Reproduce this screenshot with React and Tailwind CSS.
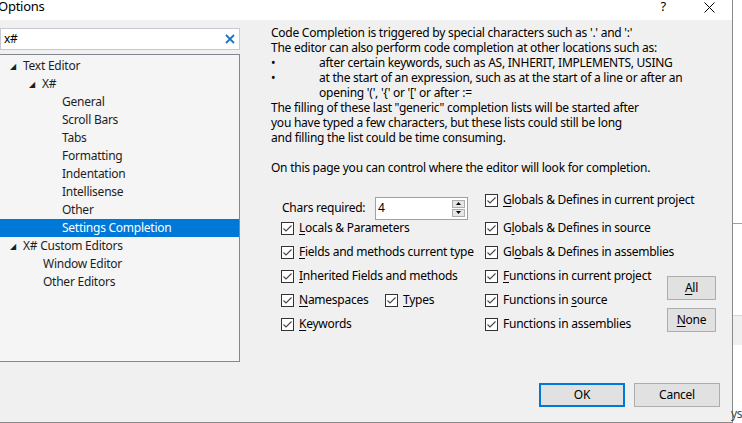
import React from "react";

const font = { fontFamily: '"Segoe UI", "Noto Sans", "Open Sans", sans-serif' };

function Check({ children }) {
  return (
    <div className="flex items-center h-[16px]">
      <div className="w-[13px] h-[13px] border border-[#333333] bg-white flex items-center justify-center shrink-0">
        <svg width="11" height="11" viewBox="0 0 11 11">
          <path d="M1.5 5.5 L4 8 L9.5 2.5" fill="none" stroke="#444" strokeWidth="1.1" />
        </svg>
      </div>
      <span className="ml-[5px] whitespace-nowrap">{children}</span>
    </div>
  );
}

const U = ({ children }) => <span className="underline underline-offset-2">{children}</span>;

function TreeRow({ indent, arrow, label, selected }) {
  return (
    <div
      className={`h-[18px] flex items-center whitespace-nowrap ${selected ? "bg-[#0078d7] text-white" : "text-[#1e1e1e]"}`}
      style={{ paddingLeft: indent }}
    >
      <span className="w-[13px] text-[8px] text-[#1e1e1e]">{arrow ? "◢" : ""}</span>
      <span>{label}</span>
    </div>
  );
}

export default function App() {
  const lines = [
    "Code Completion is triggered by special characters such as '.' and ':'",
    "The editor can also perform code completion at other locations such as:",
  ];
  return (
    <div className="w-[742px] h-[423px] flex bg-white overflow-hidden text-[12px] tracking-[-0.25px] text-black" style={font}>
      <div className="w-[733px] h-[423px] flex flex-col border-r border-b border-[#8a8a8a] shrink-0">
        {/* title */}
        <div className="h-[20px] bg-white flex items-center relative">
          <span className="text-[13px] -ml-[2px] -mt-[6px]">Options</span>
          <div className="flex-1" />
          <span className="text-[13px] mr-[38px] -mt-[6px]">?</span>
          <svg width="11" height="11" viewBox="0 0 11 11" className="mr-[17px] -mt-[6px]">
            <path d="M0.5 0.5 L10.5 10.5 M10.5 0.5 L0.5 10.5" stroke="#000" strokeWidth="1" />
          </svg>
        </div>
        {/* body */}
        <div className="flex-1 bg-[#f0f0f0] flex">
          {/* left */}
          <div className="w-[240px] flex flex-col pt-[8px]">
            <div className="h-[22px] bg-white border border-[#c5c8d6] flex items-center pl-[3px] pr-[4px]">
              <span className="flex-1">x#</span>
              <svg width="10" height="10" viewBox="0 0 10 10">
                <path d="M1 1 L9 9 M9 1 L1 9" stroke="#1e72c8" strokeWidth="1.8" />
              </svg>
            </div>
            <div className="mt-[4px] h-[308px] bg-[#f5f5f5] border border-[#828790] border-l-0 pt-[2px]">
              <TreeRow indent={10} arrow label="Text Editor" />
              <TreeRow indent={29} arrow label="X#" />
              <TreeRow indent={49} label="General" />
              <TreeRow indent={49} label="Scroll Bars" />
              <TreeRow indent={49} label="Tabs" />
              <TreeRow indent={49} label="Formatting" />
              <TreeRow indent={49} label="Indentation" />
              <TreeRow indent={49} label="Intellisense" />
              <TreeRow indent={49} label="Other" />
              <TreeRow indent={49} label="Settings Completion" selected />
              <TreeRow indent={10} arrow label="X# Custom Editors" />
              <TreeRow indent={30} label="Window Editor" />
              <TreeRow indent={30} label="Other Editors" />
            </div>
          </div>
          {/* right */}
          <div className="flex-1 flex flex-col pl-[31px] pt-[5px]">
            <div className="leading-[15px]">
              {lines.map((l) => (
                <div key={l} className="h-[15px] whitespace-nowrap">{l}</div>
              ))}
              <div className="h-[15px] flex whitespace-nowrap">
                <span className="w-[48px]">•</span>
                <span>after certain keywords, such as AS, INHERIT, IMPLEMENTS, USING</span>
              </div>
              <div className="h-[15px] flex whitespace-nowrap">
                <span className="w-[48px]">•</span>
                <span>at the start of an expression, such as at the start of a line or after an</span>
              </div>
              <div className="h-[15px] pl-[48px] whitespace-nowrap">{"opening '(', '{' or '[' or after :="}</div>
              <div className="h-[15px] whitespace-nowrap">The filling of these last "generic" completion lists will be started after</div>
              <div className="h-[15px] whitespace-nowrap">you have typed a few characters, but these lists could still be long</div>
              <div className="h-[15px] whitespace-nowrap">and filling the list could be time consuming.</div>
              <div className="h-[15px]" />
              <div className="h-[15px] whitespace-nowrap">On this page you can control where the editor will look for completion.</div>
            </div>
            <div className="flex mt-[17px]">
              {/* left options */}
              <div className="w-[214px] flex flex-col pl-[10px] pt-[4px]">
                <div className="h-[24px] flex items-center">
                  <span className="ml-[1px] w-[93px]">Chars required:</span>
                  <div className="w-[93px] h-[23px] bg-white border border-[#a0a0a0] flex items-center pl-[2px] pr-[2px]">
                    <span className="flex-1">4</span>
                    <div className="flex flex-col gap-[1px]">
                      <div className="w-[13px] h-[8px] bg-[#e5e5e5] border border-[#adadad] flex items-center justify-center">
                        <svg width="5" height="3" viewBox="0 0 5 3"><path d="M2.5 0 L5 3 L0 3 Z" fill="#000" /></svg>
                      </div>
                      <div className="w-[13px] h-[8px] bg-[#e5e5e5] border border-[#adadad] flex items-center justify-center">
                        <svg width="5" height="3" viewBox="0 0 5 3"><path d="M0 0 L5 0 L2.5 3 Z" fill="#000" /></svg>
                      </div>
                    </div>
                  </div>
                </div>
                <div className="flex flex-col gap-[8px]">
                  <Check><U>L</U>ocals &amp; Parameters</Check>
                  <Check><U>F</U>ields and methods current type</Check>
                  <Check><U>I</U>nherited Fields and methods</Check>
                  <div className="flex">
                    <div className="w-[104px]"><Check><U>N</U>amespaces</Check></div>
                    <Check><U>T</U>ypes</Check>
                  </div>
                  <Check><U>K</U>eywords</Check>
                </div>
              </div>
              {/* right options */}
              <div className="w-[182px] flex flex-col">
                <Check><U>G</U>lobals &amp; Defines in current project</Check>
                <div className="flex flex-col gap-[8px] mt-[12px]">
                  <Check>G<U>l</U>obals &amp; Defines in source</Check>
                  <Check>Gl<U>o</U>bals &amp; Defines in assemblies</Check>
                  <Check><U>F</U>unctions in current project</Check>
                  <Check>Functions in <U>s</U>ource</Check>
                  <Check>Functions in assemblies</Check>
                </div>
              </div>
              <div className="flex flex-col pt-[84px] gap-[8px]">
                <button className="w-[49px] h-[24px] bg-[#e1e1e1] border border-[#adadad]"><U>A</U>ll</button>
                <button className="w-[49px] h-[24px] bg-[#e1e1e1] border border-[#adadad]"><U>N</U>one</button>
              </div>
            </div>
            <div className="flex-1" />
            <div className="flex justify-end gap-[9px] pr-[12px] pb-[15px]">
              <button className="w-[86px] h-[24px] bg-[#e1e1e1] border-2 border-[#0078d7]">OK</button>
              <button className="w-[86px] h-[24px] bg-[#e1e1e1] border border-[#adadad]">Cancel</button>
            </div>
          </div>
        </div>
      </div>
      {/* background window strip */}
      <div className="flex-1 flex flex-col bg-white">
        <div className="h-[223px]" />
        <div className="h-[1px] bg-[#a0a0a0]" />
        <div className="h-[91px]" />
        <div className="h-[30px] bg-[#f0f0f0] border-t border-[#d8d8d8]" />
        <div className="flex-1" />
        <div className="text-[12px] text-[#444] h-[18px] -ml-[2px]">ys</div>
      </div>
    </div>
  );
}
